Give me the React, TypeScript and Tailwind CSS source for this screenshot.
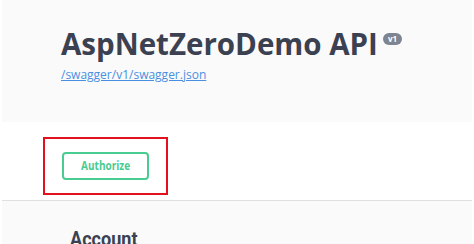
import React from "react";

export default function App() {
  return (
    <div className="w-[474px] h-[244px] overflow-hidden bg-white px-[2px]" style={{ fontFamily: '"Open Sans", sans-serif' }}>
      <section className="h-[122px] bg-[#fafafa] pl-[59px] pt-[26px]">
        <div className="flex items-start">
          <h1 className="text-[29.5px] leading-[36px] font-bold text-[#3b4151]">AspNetZeroDemo API</h1>
          <span className="ml-[5px] mt-[7px] h-[12px] px-[5px] rounded-full bg-[#7d8492] text-white text-[8px] leading-[12px] font-bold">v1</span>
        </div>
        <a href="#" className="block mt-[5px] text-[12px] leading-[16px] text-[#4990e2] underline">/swagger/v1/swagger.json</a>
      </section>
      <section className="h-[78px] bg-white pl-[41px] pt-[15px]">
        <div className="w-[125px] h-[58px] border-2 border-[#e3101e] flex items-center pl-[17px]">
          <button className="w-[87px] h-[28px] border-2 border-[#49cc90] rounded-[4px] text-[#49cc90] text-[12.5px] leading-[16px] font-bold flex items-center justify-center">
            <span className="inline-block scale-x-[0.8]">Authorize</span>
          </button>
        </div>
      </section>
      <section className="h-[44px] bg-[#fafafa] border-t border-[#e0e0e0] pl-[68px] pt-[26px]">
        <h2
          className="text-[21px] leading-[24px] font-bold text-[#3b4151] origin-left scale-x-[0.86]"
          style={{ fontFamily: 'Roboto, sans-serif' }}
        >
          Account
        </h2>
      </section>
    </div>
  );
}
